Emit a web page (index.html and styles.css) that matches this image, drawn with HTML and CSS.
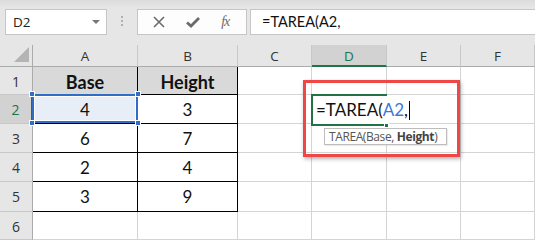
FILE: index.html
```html
<!DOCTYPE html>
<html>
<head>
<meta charset="utf-8">
<title>TAREA</title>
<link rel="stylesheet" href="styles.css">
</head>
<body>
<div class="app">
	<div class="toolbar">
		<div class="namebox"><span>D2</span><i class="drop"></i></div>
		<div class="grip"><b></b><b></b><b></b></div>
		<div class="btns">
			<svg width="12" height="12" viewBox="0 0 12 12"><path d="M1 1L11 11M11 1L1 11" stroke="#6b6b6b" stroke-width="1.6" fill="none"/></svg>
			<svg width="14" height="12" viewBox="0 0 14 12"><path d="M1 6.5L5 10L13 2" stroke="#6b6b6b" stroke-width="2.8" fill="none"/></svg>
			<span class="fx">fx</span>
		</div>
		<div class="formula">=TAREA(A2,</div>
	</div>
	<div class="sheet">
		<div class="corner"><i></i></div>
		<div class="ch">A</div>
		<div class="ch">B</div>
		<div class="ch">C</div>
		<div class="ch act">D</div>
		<div class="ch">E</div>
		<div class="ch">F</div>

		<div class="rh">1</div>
		<div class="c head tl">Base</div>
		<div class="c head tr">Height</div>
		<div class="c"></div><div class="c"></div><div class="c"></div><div class="c"></div>

		<div class="rh act">2</div>
		<div class="c tl sel">4<i class="h h1"></i><i class="h h2"></i><i class="h h3"></i><i class="h h4"></i></div>
		<div class="c tr">3</div>
		<div class="c"></div><div class="c"></div><div class="c"></div><div class="c"></div>

		<div class="rh">3</div>
		<div class="c tl">6</div>
		<div class="c tr">7</div>
		<div class="c"></div><div class="c"></div><div class="c"></div><div class="c"></div>

		<div class="rh">4</div>
		<div class="c tl">2</div>
		<div class="c tr">4</div>
		<div class="c"></div><div class="c"></div><div class="c"></div><div class="c"></div>

		<div class="rh">5</div>
		<div class="c tl">3</div>
		<div class="c tr">9</div>
		<div class="c"></div><div class="c"></div><div class="c"></div><div class="c"></div>

		<div class="rh">6</div>
		<div class="c"></div><div class="c"></div>
		<div class="c"></div><div class="c"></div><div class="c"></div><div class="c"></div>
	</div>

	<!-- in-cell editor over D2 -->
	<div class="editor">=TAREA(<span class="ref">A2</span>,<i class="caret"></i><i class="fill"></i></div>
	<div class="tip">TAREA(Base, <b>Height</b>)</div>
	<div class="mark"></div>
</div>
</body>
</html>
```
FILE: styles.css
```css
*{ margin:0; padding:0; box-sizing:border-box;}
body{ background:#fff; font-family:"Open Sans", "Noto Sans", sans-serif;}
.app{ width:535px; height:241px; position:relative; overflow:hidden; background:#fff;}

/* toolbar / formula bar */
.toolbar{ height:45px; display:flex; align-items:flex-start; padding:9px 0 0 5px; background:linear-gradient(#dcdcdc, #e6e6e6 8px);}
.namebox{ width:102px; height:26px; background:#fff; border:1px solid #c6c6c6; display:flex; align-items:center; justify-content:space-between; padding:0 6px 0 7px; font-size:13.5px; color:#222;}
.drop{ width:0; height:0; border-left:4px solid transparent; border-right:4px solid transparent; border-top:4px solid #777;}
.grip{ width:30px; display:flex; flex-direction:column; align-items:center; gap:2px; padding-top:7px;}
.grip b{ width:2px; height:2px; background:#b0b0b0;}
.btns{ width:110px; height:26px; background:#fdfdfd; border:1px solid #c6c6c6; display:flex; align-items:center; justify-content:space-around; padding:0 6px 0 4px;}
.fx{ font-family:"Liberation Serif", serif; font-style:italic; font-size:14px; color:#6b6b6b; letter-spacing:-1px;}
.formula{ flex:1; margin-left:3px; height:26px; background:#fff; border:1px solid #c6c6c6; border-right:none; font-family:Lato, sans-serif; font-size:14.5px; line-height:24px; padding-left:11px; color:#111;}

/* grid */
.sheet{ display:grid; grid-template-columns:33px 105px 100px 74px 75px 74px 74px; grid-template-rows:22px 28px 29px 29px 29px 30px 28px;}
.corner{ background:#e6e6e6; border-right:1px solid #ababab; border-bottom:1px solid #ababab; position:relative;}
.corner i{ position:absolute; right:3px; bottom:4px; width:0; height:0; border-left:15px solid transparent; border-bottom:15px solid #b4b4b4;}
.ch{ background:#e6e6e6; border-right:1px solid #c8c8c8; border-bottom:1px solid #ababab; text-align:center; font-size:13.5px; line-height:22px; color:#333;}
.ch.act{ background:#d2d2d2; border-bottom:2px solid #217346; color:#217346;}
.rh{ background:#e6e6e6; border-right:1px solid #ababab; border-bottom:1px solid #c8c8c8; text-align:center; font-size:14px; line-height:30px; color:#333;}
.rh.act{ background:#d2d2d2; border-right:2px solid #217346; color:#217346;}
.c{ border-right:1px solid #d4d4d4; border-bottom:1px solid #d4d4d4; text-align:center; font-family:Lato, sans-serif; font-size:17px; line-height:30px; color:#111;}
.tl, .tr{ border-right-color:#000; border-bottom-color:#000;}
.head{ background:#d9d9d9; font-weight:bold; font-size:18px;}

/* selected A2 */
.sel{ position:relative; background:#e8eef8;}
.sel::before{ content:""; position:absolute; left:-1px; top:-1px; right:-1px; bottom:0; border:2px solid #2f6dc6; box-shadow:inset 0 0 0 1px #fff;}
.h{ position:absolute; width:6px; height:6px; background:#2f6dc6; border:1px solid #fff;}
.h1{ left:-4px; top:-4px;}
.h2{ right:-4px; top:-4px;}
.h3{ left:-4px; bottom:-3px;}
.h4{ right:-4px; bottom:-3px;}

/* overlays */
.editor{ position:absolute; left:311px; top:94px; width:76px; height:32px; border:2px solid #217346; border-right:none; background:#fff; font-family:Lato, sans-serif; font-size:17px; line-height:28px; padding-left:3px; white-space:nowrap; color:#111;}
.ref{ color:#3c78d8;}
.caret{ display:inline-block; width:1px; height:19px; background:#000; vertical-align:-4px; margin-left:1px;}
.fill{ position:absolute; right:-2px; bottom:-4px; width:5px; height:5px; background:#217346; border:1px solid #fff;}
.tip{ position:absolute; left:324px; top:128px; width:123px; height:17px; background:#fff; border:1px solid #bdbdbd; font-size:12px; line-height:15px; color:#555; padding-left:4px; white-space:nowrap; letter-spacing:-0.4px; box-shadow:1px 1px 1px rgba(0,0,0,.08);}
.tip b{ color:#444;}
.mark{ position:absolute; left:303px; top:80px; width:157px; height:77px; border:3px solid #ef4646; box-shadow:1px 2px 4px rgba(0,0,0,.3);}
```
